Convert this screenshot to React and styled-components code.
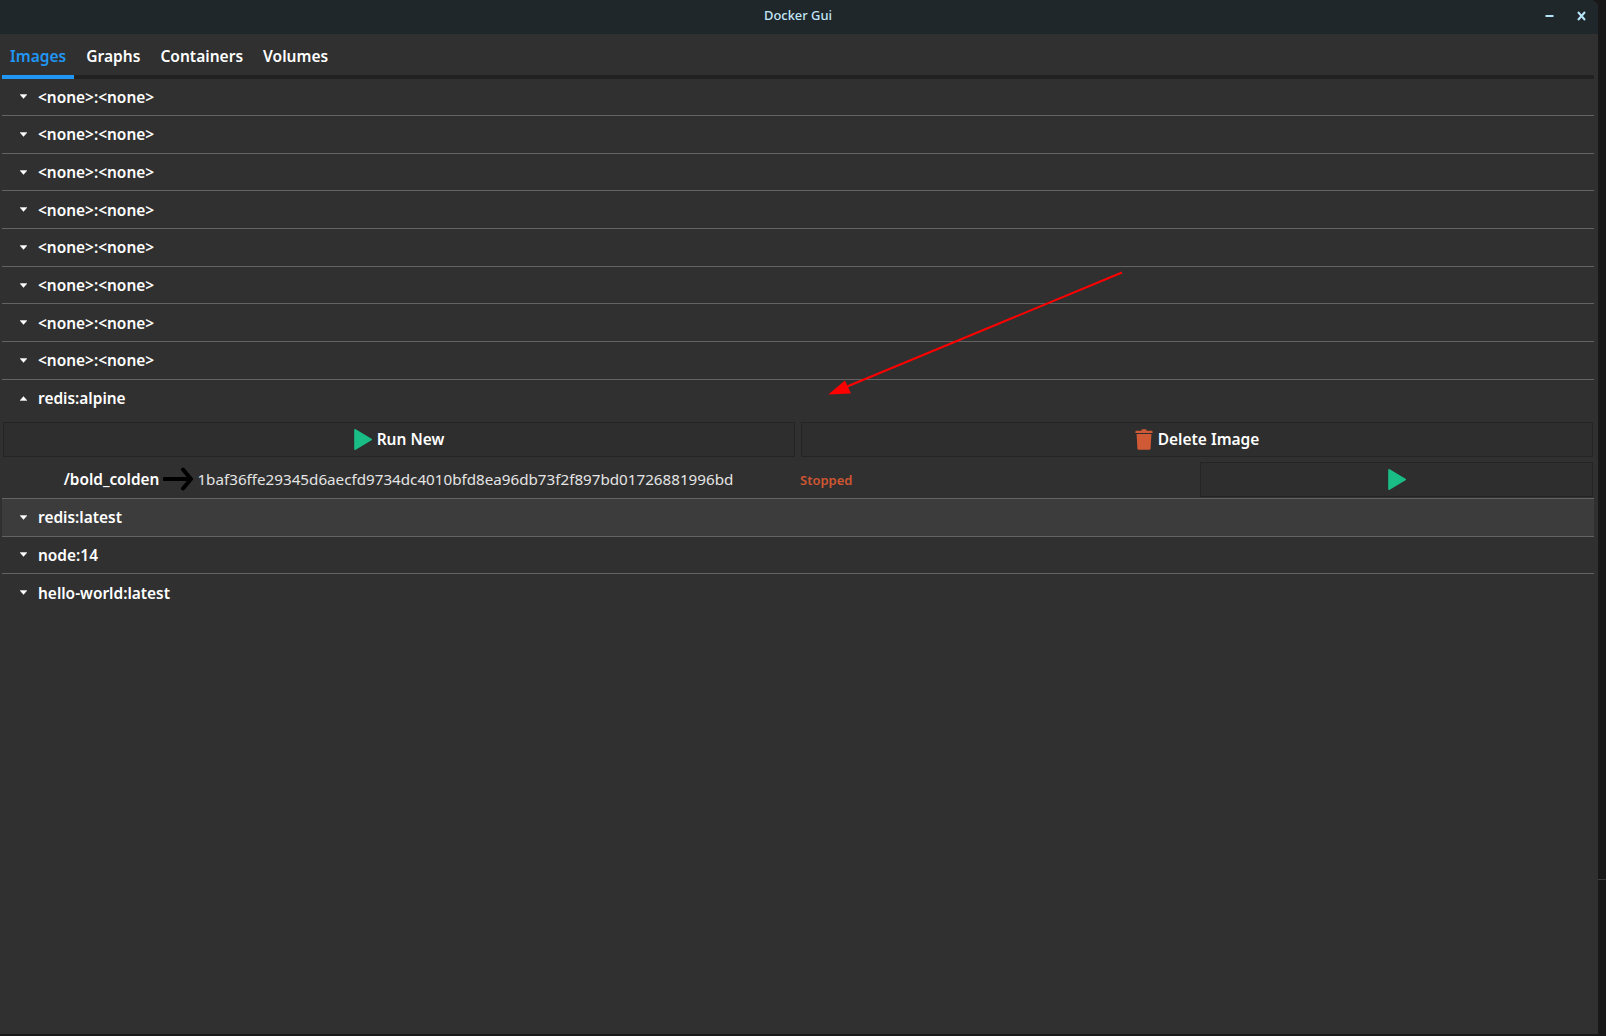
import React from "react";
import styled, { createGlobalStyle } from "styled-components";

const Global = createGlobalStyle`
  html, body { margin: 0; padding: 0; background: #181818; overflow: hidden; }
  * { box-sizing: border-box; }
  #root { width: 1606px; height: 1036px; }
`;
const Desktop = styled.div`
  display: flex; width: 1606px; height: 1036px; background: #181818;
  font-family: "Noto Sans", sans-serif; color: #fff;
`;
const Window = styled.div`
  position: relative; display: flex; flex-direction: column;
  width: 1598px; height: 1034px; background: #303030;
  border-top-right-radius: 8px; overflow: hidden;
`;
const Edge = styled.div`
  flex: 1; padding-top: 879px;
`;
const EdgeTick = styled.div`
  height: 1px; background: #3a3a3a;
`;
const TitleBar = styled.header`
  position: relative; flex: none; height: 34px; background: #1f272b;
  display: flex; align-items: center; justify-content: center;
  font-size: 12.9px; font-weight: 500; color: #c3e6f7; padding: 0 2px 5px 0;
`;
const WindowControls = styled.div`
  position: absolute; right: 12px; top: 11px; display: flex; gap: 23px;
`;
const TabBar = styled.nav`
  flex: none; height: 44.5px; margin: 0 4px 0 2px; display: flex; gap: 4px;
  border-bottom: 4px solid #212121;
`;
const Tab = styled.div`
  height: 44.5px; padding: 4px 8px 0; display: flex; align-items: center;
  font-size: 15.55px; font-weight: 600; color: ${p => (p.$active ? "#2196f3" : "#fff")};
  border-bottom: 4px solid ${p => (p.$active ? "#2196f3" : "transparent")};
`;
const List = styled.main`
  flex: 1; margin: 0 4px 0 2px; display: flex; flex-direction: column;
`;
const Row = styled.div`
  flex: none; height: 37.667px; display: flex; align-items: center; gap: 11px;
  padding: 0 0 0 18px; font-size: 15.45px; font-weight: 600;
  background: ${p => (p.$hover ? "#3c3c3c" : "transparent")};
  border-bottom: 1px solid ${p => (p.$last ? "transparent" : "#636363")};
`;
const Panel = styled.section`
  flex: none; height: 81.5px; padding: 4.5px 1px 1px; display: flex; flex-direction: column; gap: 5px;
  border-bottom: 1px solid #636363;
`;
const ActionRow = styled.div`
  display: grid; grid-template-columns: 1fr 1fr; gap: 6px; height: 35px;
`;
const ContainerRow = styled.div`
  display: grid; grid-template-columns: 1fr 394px 393px; gap: 6px; height: 35px; align-items: center;
`;
const ActionButton = styled.button`
  height: 35px; display: flex; align-items: center; justify-content: center; gap: 5px;
  background: #2e2e2e; border: 1px solid #242424; color: #fff; padding: 0;
  font: 600 15.5px "Noto Sans", sans-serif;
`;
const ContainerInfo = styled.div`
  display: flex; align-items: center; justify-content: center; gap: 4px; font-size: 15.2px;
`;
const ContainerName = styled.span`
  font-size: 15.4px; font-weight: 600;
`;
const ContainerId = styled.span`
  font-weight: 400; color: #e4e4e4;
`;
const Status = styled.span`
  font-size: 13px; font-weight: 600; color: #cf5632; padding-top: 1px;
`;
const Annotation = styled.svg`
  position: absolute; left: 0; top: 0; pointer-events: none;
`;

const Caret = ({ up }) => (
  <svg width="7" height="5" viewBox="0 0 7 5" style={{ flex: "none" }}>
    <path d={up ? "M3.5 0.5 L7 4.5 L0 4.5 Z" : "M0 0.5 L7 0.5 L3.5 4.5 Z"} fill="#fff" stroke="#fff" strokeWidth="0.4" strokeLinejoin="round" />
  </svg>
);
const Play = () => (
  <svg width="18" height="21" viewBox="0 0 18 21">
    <path d="M1.2 1 L17 10.5 L1.2 20 Z" fill="#19bd85" stroke="#19bd85" strokeWidth="2" strokeLinejoin="round" />
  </svg>
);
const Trash = () => (
  <svg width="18" height="21" viewBox="0 0 18 21">
    <path d="M6.5 1.2 Q6.5 .3 7.5 .3 H10.5 Q11.5 .3 11.5 1.2 V1.8 H16.5 Q17.6 1.8 17.6 3 V4 H.4 V3 Q.4 1.8 1.5 1.8 H6.5 Z" fill="#d05a36" />
    <path d="M1.6 5 H16.4 L15.6 19.2 Q15.5 20.8 14 20.8 H4 Q2.5 20.8 2.4 19.2 Z" fill="#d05a36" />
  </svg>
);
const BlackArrow = () => (
  <svg width="30" height="24" viewBox="0 0 30 24" style={{ flex: "none" }}>
    <path d="M1.5 12 H27.5 M20 2.5 L28 12 L20 21.5" fill="none" stroke="#000" strokeWidth="4" strokeLinecap="round" strokeLinejoin="round" />
  </svg>
);

const names = Array(8).fill("<none>:<none>");

export default function App() {
  return (
    <Desktop>
      <Global />
      <Window>
        <TitleBar>
          Docker Gui
          <WindowControls>
            <svg width="9" height="10" viewBox="0 0 9 10"><path d="M0.5 5 H8.5" stroke="#b8e4f8" strokeWidth="2" /></svg>
            <svg width="9" height="10" viewBox="0 0 9 10"><path d="M1 1 L8 9 M8 1 L1 9" stroke="#b8e4f8" strokeWidth="2" /></svg>
          </WindowControls>
        </TitleBar>
        <TabBar>
          <Tab $active>Images</Tab>
          <Tab>Graphs</Tab>
          <Tab>Containers</Tab>
          <Tab>Volumes</Tab>
        </TabBar>
        <List>
          {names.map((n, i) => (
            <Row key={i}><Caret />{n}</Row>
          ))}
          <Row $last><Caret up />redis:alpine</Row>
          <Panel>
            <ActionRow>
              <ActionButton><Play />Run New</ActionButton>
              <ActionButton><Trash />Delete Image</ActionButton>
            </ActionRow>
            <ContainerRow>
              <ContainerInfo>
                <ContainerName>/bold_colden</ContainerName>
                <BlackArrow />
                <ContainerId>1baf36ffe29345d6aecfd9734dc4010bfd8ea96db73f2f897bd01726881996bd</ContainerId>
              </ContainerInfo>
              <Status>Stopped</Status>
              <ActionButton><Play /></ActionButton>
            </ContainerRow>
          </Panel>
          <Row $hover><Caret />redis:latest</Row>
          <Row><Caret />node:14</Row>
          <Row $last><Caret />hello-world:latest</Row>
        </List>
        <Annotation width="1598" height="1034">
          <path d="M1122 272.5 L846 387" stroke="#ff0000" strokeWidth="2" fill="none" />
          <path d="M828.3 394.5 L845 380.5 L851 393.5 Z" fill="#ff0000" />
        </Annotation>
      </Window>
      <Edge><EdgeTick /></Edge>
    </Desktop>
  );
}
